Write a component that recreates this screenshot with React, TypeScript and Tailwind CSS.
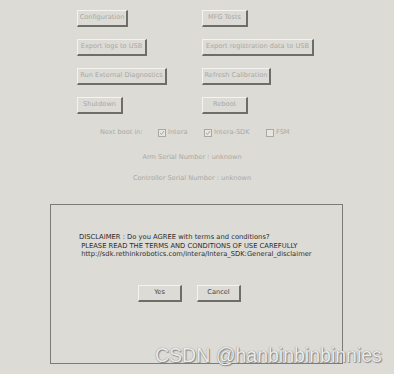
import React from "react";

const F = { fontFamily: '"DejaVu Sans", "Liberation Sans", sans-serif' };

function Btn({ w, label, dark }: { w: string; label: string; dark?: boolean }) {
  return (
    <div
      className={`${w} h-[17px] flex items-center justify-center border-t border-l border-t-[#f4f3f0] border-l-[#f4f3f0] border-b-2 border-r-2 border-b-[#6e6d6a] border-r-[#6e6d6a] bg-[#dcdbd6] text-[6.6px] whitespace-nowrap ${dark ? "text-[#454545]" : "text-[#a9a8a4]"}`}
    >
      {label}
    </div>
  );
}

function Check({ checked, label }: { checked: boolean; label: string }) {
  return (
    <div className="flex items-center gap-[2px]">
      <div className="w-[8px] h-[8px] border border-[#a9a8a4] bg-[#e6e5e1] flex items-center justify-center">
        {checked && (
          <svg width="6" height="6" viewBox="0 0 6 6">
            <path d="M1 3 L2.5 4.5 L5 1" stroke="#a09f9b" strokeWidth="0.9" fill="none" />
          </svg>
        )}
      </div>
      <span>{label}</span>
    </div>
  );
}

export default function App() {
  return (
    <div className="relative w-[394px] h-[374px] bg-[#dcdbd6] overflow-hidden" style={F}>
      <div className="pt-[10px] pl-[77px] grid grid-cols-[125px_auto] gap-y-[12px]">
        <Btn w="w-[51px]" label="Configuration" />
        <Btn w="w-[46px]" label="MFG Tests" />
        <Btn w="w-[70px]" label="Export logs to USB" />
        <Btn w="w-[112px]" label="Export registration data to USB" />
        <Btn w="w-[90px]" label="Run External Diagnostics" />
        <Btn w="w-[69px]" label="Refresh Calibration" />
        <Btn w="w-[46px]" label="Shutdown" />
        <Btn w="w-[46px]" label="Reboot" />
      </div>
      <div className="mt-[13px] pl-[100px] flex items-center h-[12px] text-[6.6px] text-[#a9a8a4]">
        <span className="w-[58px]">Next boot in:</span>
        <div className="w-[46px]"><Check checked label="Intera" /></div>
        <div className="w-[62px]"><Check checked label="Intera-SDK" /></div>
        <Check checked={false} label="FSM" />
      </div>
      <div className="mt-[14px] flex flex-col items-center text-[6.6px] text-[#a9a8a4] pr-[10px]">
        <div className="h-[8px] leading-[8px]">Arm Serial Number : unknown</div>
        <div className="mt-[13px] h-[8px] leading-[8px]">Controller Serial Number : unknown</div>
      </div>
      <div className="mt-[22px] ml-[50px] w-[293px] h-[160px] border border-[#7c7b78] bg-[#dcdbd6] text-[#2e2e2e]">
        <div className="pt-[28px] pl-[28px] text-[6.75px] leading-[8.5px] whitespace-pre">
          <div>DISCLAIMER : Do you AGREE with terms and conditions?</div>
          <div> PLEASE READ THE TERMS AND CONDITIONS OF USE CAREFULLY</div>
          <div> http://sdk.rethinkrobotics.com/intera/Intera_SDK:General_disclaimer</div>
        </div>
        <div className="mt-[26px] pl-[87px] flex gap-[15px]">
          <Btn w="w-[44px]" label="Yes" dark />
          <Btn w="w-[44px]" label="Cancel" dark />
        </div>
      </div>
      <div
        className="absolute left-[155px] top-[343px] text-[19.5px] leading-[24px] text-[#ececec] whitespace-nowrap"
        style={{ fontFamily: '"Liberation Sans", Arial, sans-serif', textShadow: "0 0 1px #6f6f6f, 1px 1px 1px #8a8a8a" }}
      >
        CSDN @hanbinbinbinnies
      </div>
    </div>
  );
}
